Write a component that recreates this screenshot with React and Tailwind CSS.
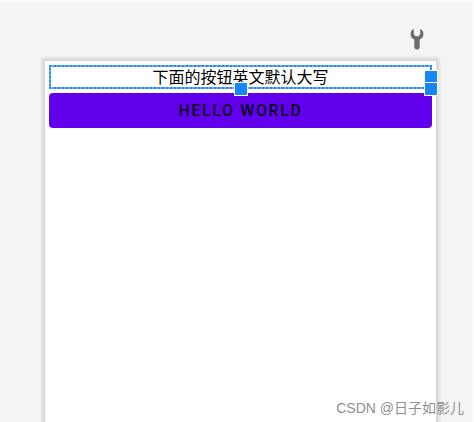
import React from 'react';

function Handle({ className }) {
  return <span className={`absolute h-3.5 w-3.5 border border-white bg-[#1886f7] ${className}`} />;
}

function SelectedText({ children }) {
  return (
    <div className="relative h-6 border-2 border-[#62abf3]">
      <div className="absolute -inset-0.5 border-2 border-dotted border-[#2a89ec]" />
      <p className="text-center font-['Noto_Sans_CJK_SC',sans-serif] text-base leading-[18px] text-black">
        {children}
      </p>
      <Handle className="-right-2 top-[3px]" />
      <Handle className="-right-2 top-[15px]" />
      <Handle className="left-1/2 top-[15px] -translate-x-1/2" />
    </div>
  );
}

function WrenchIcon() {
  return (
    <svg viewBox="0 0 14 22" className="h-[22px] w-3.5" fill="#6b6b6b" aria-hidden="true">
      <path d="M3.800 1v5.600L5.600 8.300h2.800l1.800-1.700V1C12.400 1.800 13.400 3.700 13.400 6c0 2.700-1.400 4.700-3.700 5.600v7.100a2.700 2.700 0 0 1-5.400 0v-7.100C2 10.700.6 8.700.6 6c0-2.300 1-4.200 3.200-5z" />
    </svg>
  );
}

function App() {
  return (
    <div className="flex h-screen flex-col overflow-hidden border-t-2 border-r-2 border-[#fcfcfc] bg-[#f4f4f4]">
      <header className="flex justify-end pt-[26px] pr-12 pb-[11px]">
        <button type="button" aria-label="Layout settings">
          <WrenchIcon />
        </button>
      </header>

      <main className="mr-9 ml-[45px] flex flex-1 flex-col gap-1 bg-white px-1 pt-1 shadow-[0_0_3px_3px_#d6d6d6]">
        <SelectedText>下面的按钮英文默认大写</SelectedText>
        <button
          type="button"
          className="h-[35px] rounded bg-[#6200ee] text-center font-['Roboto',sans-serif] text-base font-medium tracking-widest text-[#0c0020] uppercase"
        >
          Hello World
        </button>
      </main>

      <span className="absolute right-2.5 bottom-1 font-['Liberation_Sans','Noto_Sans_CJK_SC',sans-serif] text-sm leading-5 text-[#8f8f8f]">
        CSDN @日子如影儿
      </span>
    </div>
  );
}

export default App;
